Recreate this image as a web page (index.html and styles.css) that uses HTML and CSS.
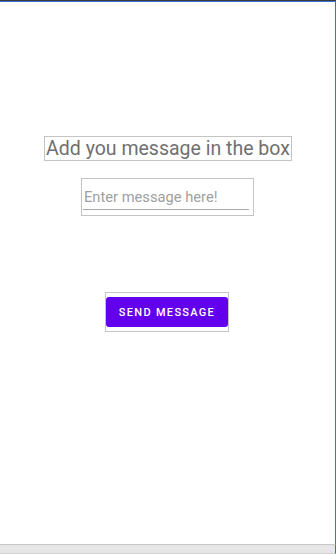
FILE: index.html
```html
<!DOCTYPE html>
<html>
<head>
<meta charset="utf-8">
<link rel="stylesheet" href="styles.css">
</head>
<body>
<div class="screen">
  <div class="content">
    <div class="title">Add you message in the box</div>
    <div class="input-box">
      <div class="input">Enter message here!</div>
    </div>
    <div class="button-box">
      <div class="button">SEND MESSAGE</div>
    </div>
  </div>
  <div class="bottom-bar"></div>
</div>
</body>
</html>
```
FILE: styles.css
```css
html, body {
  margin: 0;
  padding: 0;
  background: #ffffff;
}
.screen {
  width: 336px;
  height: 554px;
  box-sizing: border-box;
  border-top: 1px solid #3a3a3a;
  display: flex;
  flex-direction: column;
  font-family: Roboto, "Liberation Sans", sans-serif;
}
.content {
  flex: 1;
  box-sizing: border-box;
  border-top: 1px solid #2f74d0;
  border-right: 1px solid #2f74d0;
  display: flex;
  flex-direction: column;
  align-items: center;
  padding-top: 134px;
}
.title {
  border: 1px solid #c4c4c4;
  color: #707070;
  font-size: 19.5px;
  font-weight: 400;
  line-height: 23px;
  padding: 0 1px;
  margin-left: 1px;
}
.input-box {
  margin-top: 17px;
  width: 173px;
  height: 38px;
  box-sizing: border-box;
  border: 1px solid #c4c4c4;
  padding: 7px 4px 0 1px;
}
.input {
  color: #a0a0a0;
  font-size: 14.7px;
  font-weight: 400;
  line-height: 22px;
  padding-left: 1px;
  border-bottom: 1px solid #a8a8a8;
  height: 23px;
}
.button-box {
  margin-top: 76px;
  width: 124px;
  height: 40px;
  box-sizing: border-box;
  border: 1px solid #c4c4c4;
  padding: 4px 0 0 0;
  margin-right: 1px;
}
.button {
  background: #6200ee;
  color: #ffffff;
  height: 30px;
  border-radius: 3px;
  font-size: 11px;
  font-weight: 500;
  letter-spacing: 1.3px;
  display: flex;
  align-items: center;
  justify-content: center;
}
.bottom-bar {
  height: 10px;
  box-sizing: border-box;
  background: #e6e6e6;
  border-top: 1px solid #c8c8c8;
  border-bottom: 1px solid #d0d0d0;
  border-right: 1px solid #2f74d0;
}
```
